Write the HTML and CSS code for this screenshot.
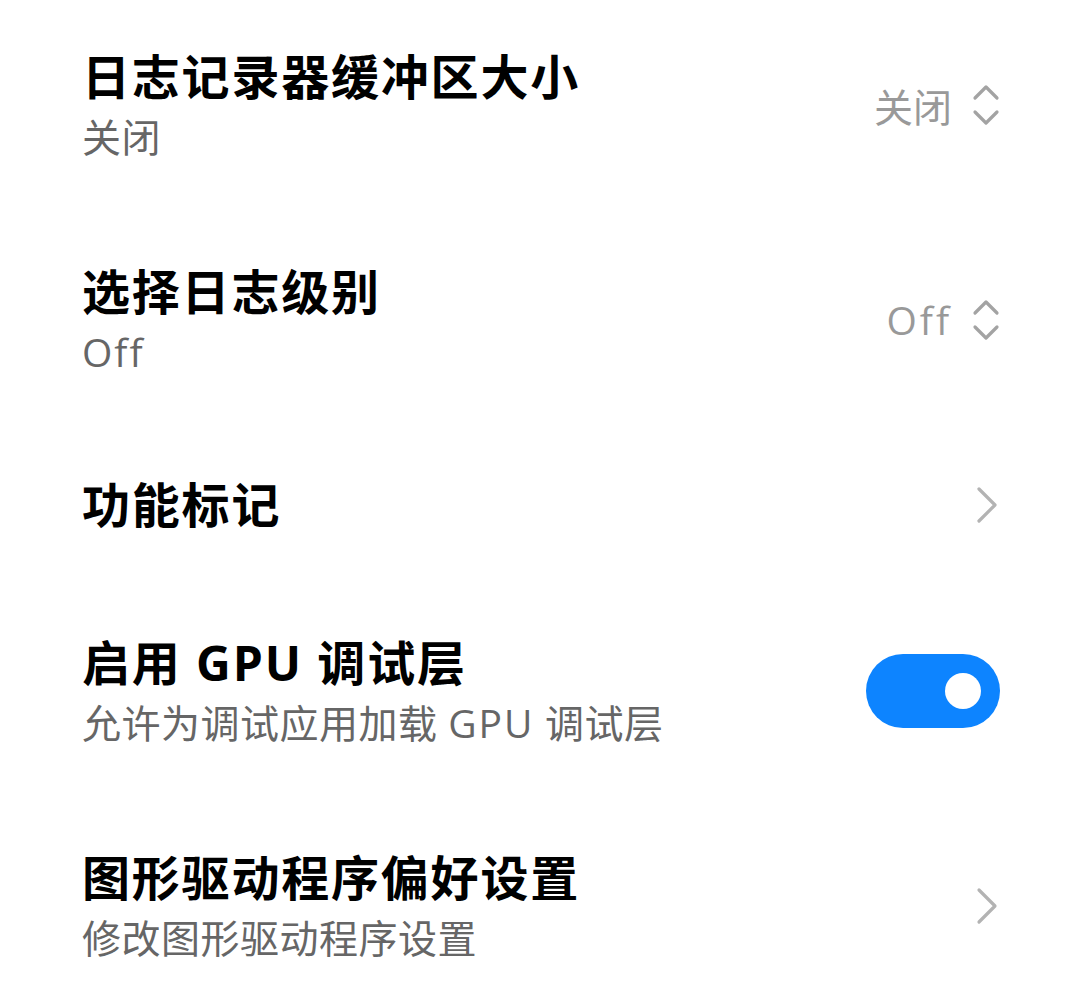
FILE: index.html
```html
<!DOCTYPE html>
<html lang="zh-CN">
<head>
<meta charset="utf-8">
<link rel="stylesheet" href="styles.css">
</head>
<body>
<div class="list">
  <div class="row">
    <div class="text">
      <div class="title">日志记录器缓冲区大小</div>
      <div class="sub">关闭</div>
    </div>
    <div class="value">
      <span>关闭</span>
      <svg class="updown" viewBox="0 0 28 42" width="28" height="42"><path d="M3 14 L14 3 L25 14 M3 28 L14 39 L25 28" fill="none" stroke="#a3a3a3" stroke-width="3.2" stroke-linecap="round" stroke-linejoin="round"/></svg>
    </div>
  </div>
  <div class="row">
    <div class="text">
      <div class="title">选择日志级别</div>
      <div class="sub latin">Off</div>
    </div>
    <div class="value">
      <span class="latin">Off</span>
      <svg class="updown" viewBox="0 0 28 42" width="28" height="42"><path d="M3 14 L14 3 L25 14 M3 28 L14 39 L25 28" fill="none" stroke="#a3a3a3" stroke-width="3.2" stroke-linecap="round" stroke-linejoin="round"/></svg>
    </div>
  </div>
  <div class="row single">
    <div class="text">
      <div class="title">功能标记</div>
    </div>
    <div class="value">
      <svg class="chev" viewBox="0 0 24 38" width="24" height="38"><path d="M3 3 L19 19 L3 35" fill="none" stroke="#b3b3b3" stroke-width="3.2" stroke-linecap="round" stroke-linejoin="round"/></svg>
    </div>
  </div>
  <div class="row">
    <div class="text">
      <div class="title">启用 <span class="latin">GPU</span> 调试层</div>
      <div class="sub">允许为调试应用加载 <span class="latin">GPU</span> 调试层</div>
    </div>
    <div class="value">
      <div class="toggle"><div class="knob"></div></div>
    </div>
  </div>
  <div class="row">
    <div class="text">
      <div class="title">图形驱动程序偏好设置</div>
      <div class="sub">修改图形驱动程序设置</div>
    </div>
    <div class="value">
      <svg class="chev" viewBox="0 0 24 38" width="24" height="38"><path d="M3 3 L19 19 L3 35" fill="none" stroke="#b3b3b3" stroke-width="3.2" stroke-linecap="round" stroke-linejoin="round"/></svg>
    </div>
  </div>
</div>
</body>
</html>
```

FILE: styles.css
```css
html, body {
  margin: 0;
  padding: 0;
  background: #ffffff;
}
body {
  width: 1080px;
  height: 985px;
  overflow: hidden;
  font-family: "Open Sans", "Noto Sans CJK SC", sans-serif;
}
.list {
  display: flex;
  flex-direction: column;
  padding: 0 80px 0 82px;
  margin-top: -3px;
}
.row {
  display: flex;
  align-items: center;
  justify-content: space-between;
  padding: 48px 0;
}
.row.single {
  padding: 46px 0;
}
.text {
  display: flex;
  flex-direction: column;
}
.title {
  font-size: 48px;
  line-height: 64px;
  font-weight: 700;
  color: #000000;
  letter-spacing: 1.8px;
}
.sub {
  font-size: 39px;
  line-height: 55px;
  color: #666666;
  letter-spacing: 0.5px;
}
.latin {
  letter-spacing: 2px;
}
.value {
  display: flex;
  align-items: center;
  gap: 20px;
  font-size: 39px;
  color: #999999;
}
.value .latin {
  letter-spacing: 3px;
}
.updown {
  display: block;
}
.chev {
  display: block;
}
.toggle {
  width: 134px;
  height: 74px;
  border-radius: 37px;
  background: #0d84ff;
  display: flex;
  align-items: center;
  justify-content: flex-end;
  padding-right: 19px;
  box-sizing: border-box;
}
.knob {
  width: 36px;
  height: 36px;
  border-radius: 50%;
  background: #ffffff;
}
```
